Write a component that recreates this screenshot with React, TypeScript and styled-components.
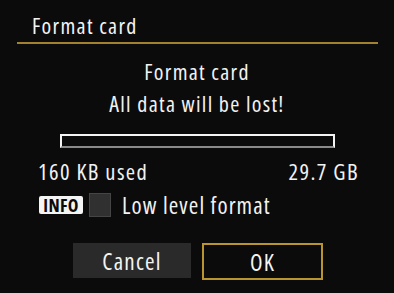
import React from "react";
import styled, { createGlobalStyle } from "styled-components";

const Global = createGlobalStyle`
  html, body { margin: 0; padding: 0; background: #0b0b0b; }
  body { font-family: "Open Sans", "Noto Sans", sans-serif; color: #f2f2f2; }
`;

const Screen = styled.div`
  width: 394px;
  height: 293px;
  background: #0b0b0b;
  display: flex;
  flex-direction: column;
  font-stretch: 75%;
`;

const Header = styled.div`
  padding: 10px 0 0 32px;
`;

const Title = styled.div`
  font-size: 22px;
  line-height: 30px;
  letter-spacing: 1.3px;
  color: #f4f4f4;
`;

const Divider = styled.div`
  margin: 2px 16px 0 17px;
  height: 2px;
  background: #a3822f;
`;

const Body = styled.div`
  display: flex;
  flex-direction: column;
  align-items: center;
  padding-top: 11px;
`;

const Message = styled.div`
  font-size: 22px;
  line-height: 32px;
  letter-spacing: 1.3px;
  text-align: center;
`;

const Bar = styled.div`
  margin-top: 15px;
  width: 275px;
  height: 14px;
  box-sizing: border-box;
  border: 2px solid #f4f4f4;
  border-bottom-color: #8a8a8a;
  background: #0b0b0b;
`;

const Usage = styled.div`
  align-self: stretch;
  display: flex;
  justify-content: space-between;
  padding: 0 35px 0 38px;
  margin-top: 10px;
  font-size: 22.5px;
  line-height: 28px;
  letter-spacing: 1.4px;
`;

const Option = styled.div`
  align-self: stretch;
  display: flex;
  align-items: center;
  padding-left: 39px;
  margin-top: 5px;
  height: 28px;
`;

const InfoBadge = styled.span`
  display: inline-flex;
  align-items: center;
  justify-content: center;
  width: 44px;
  height: 18px;
  background: #f4f4f4;
  color: #0b0b0b;
  border-radius: 2px;
  font-size: 18px;
  font-weight: 700;
  letter-spacing: 0.3px;
`;

const CheckBox = styled.span`
  width: 22px;
  height: 24px;
  margin-left: 6px;
  box-sizing: border-box;
  background: #303030;
  border: 1px solid #454545;
`;

const OptionLabel = styled.span`
  margin-left: 11px;
  font-size: 23px;
  line-height: 28px;
  letter-spacing: 1.1px;
`;

const Buttons = styled.div`
  display: flex;
  align-items: flex-start;
  gap: 11px;
  padding-left: 73px;
  margin-top: 24px;
`;

const Button = styled.div<{ $selected?: boolean }>`
  width: ${(p) => (p.$selected ? "121px" : "118px")};
  height: ${(p) => (p.$selected ? "37px" : "35px")};
  box-sizing: border-box;
  display: flex;
  align-items: center;
  justify-content: center;
  background: ${(p) => (p.$selected ? "#0b0b0b" : "#2a2a2a")};
  border: ${(p) => (p.$selected ? "2px solid #b8952f" : "none")};
  font-size: 23px;
  letter-spacing: 1.2px;
  color: #f4f4f4;
`;

export default function App() {
  return (
    <>
      <Global />
      <Screen>
        <Header>
          <Title>Format card</Title>
        </Header>
        <Divider />
        <Body>
          <Message>Format card</Message>
          <Message>All data will be lost!</Message>
          <Bar />
          <Usage>
            <span>160 KB used</span>
            <span>29.7 GB</span>
          </Usage>
          <Option>
            <InfoBadge>INFO</InfoBadge>
            <CheckBox />
            <OptionLabel>Low level format</OptionLabel>
          </Option>
        </Body>
        <Buttons>
          <Button>Cancel</Button>
          <Button $selected>OK</Button>
        </Buttons>
      </Screen>
    </>
  );
}
